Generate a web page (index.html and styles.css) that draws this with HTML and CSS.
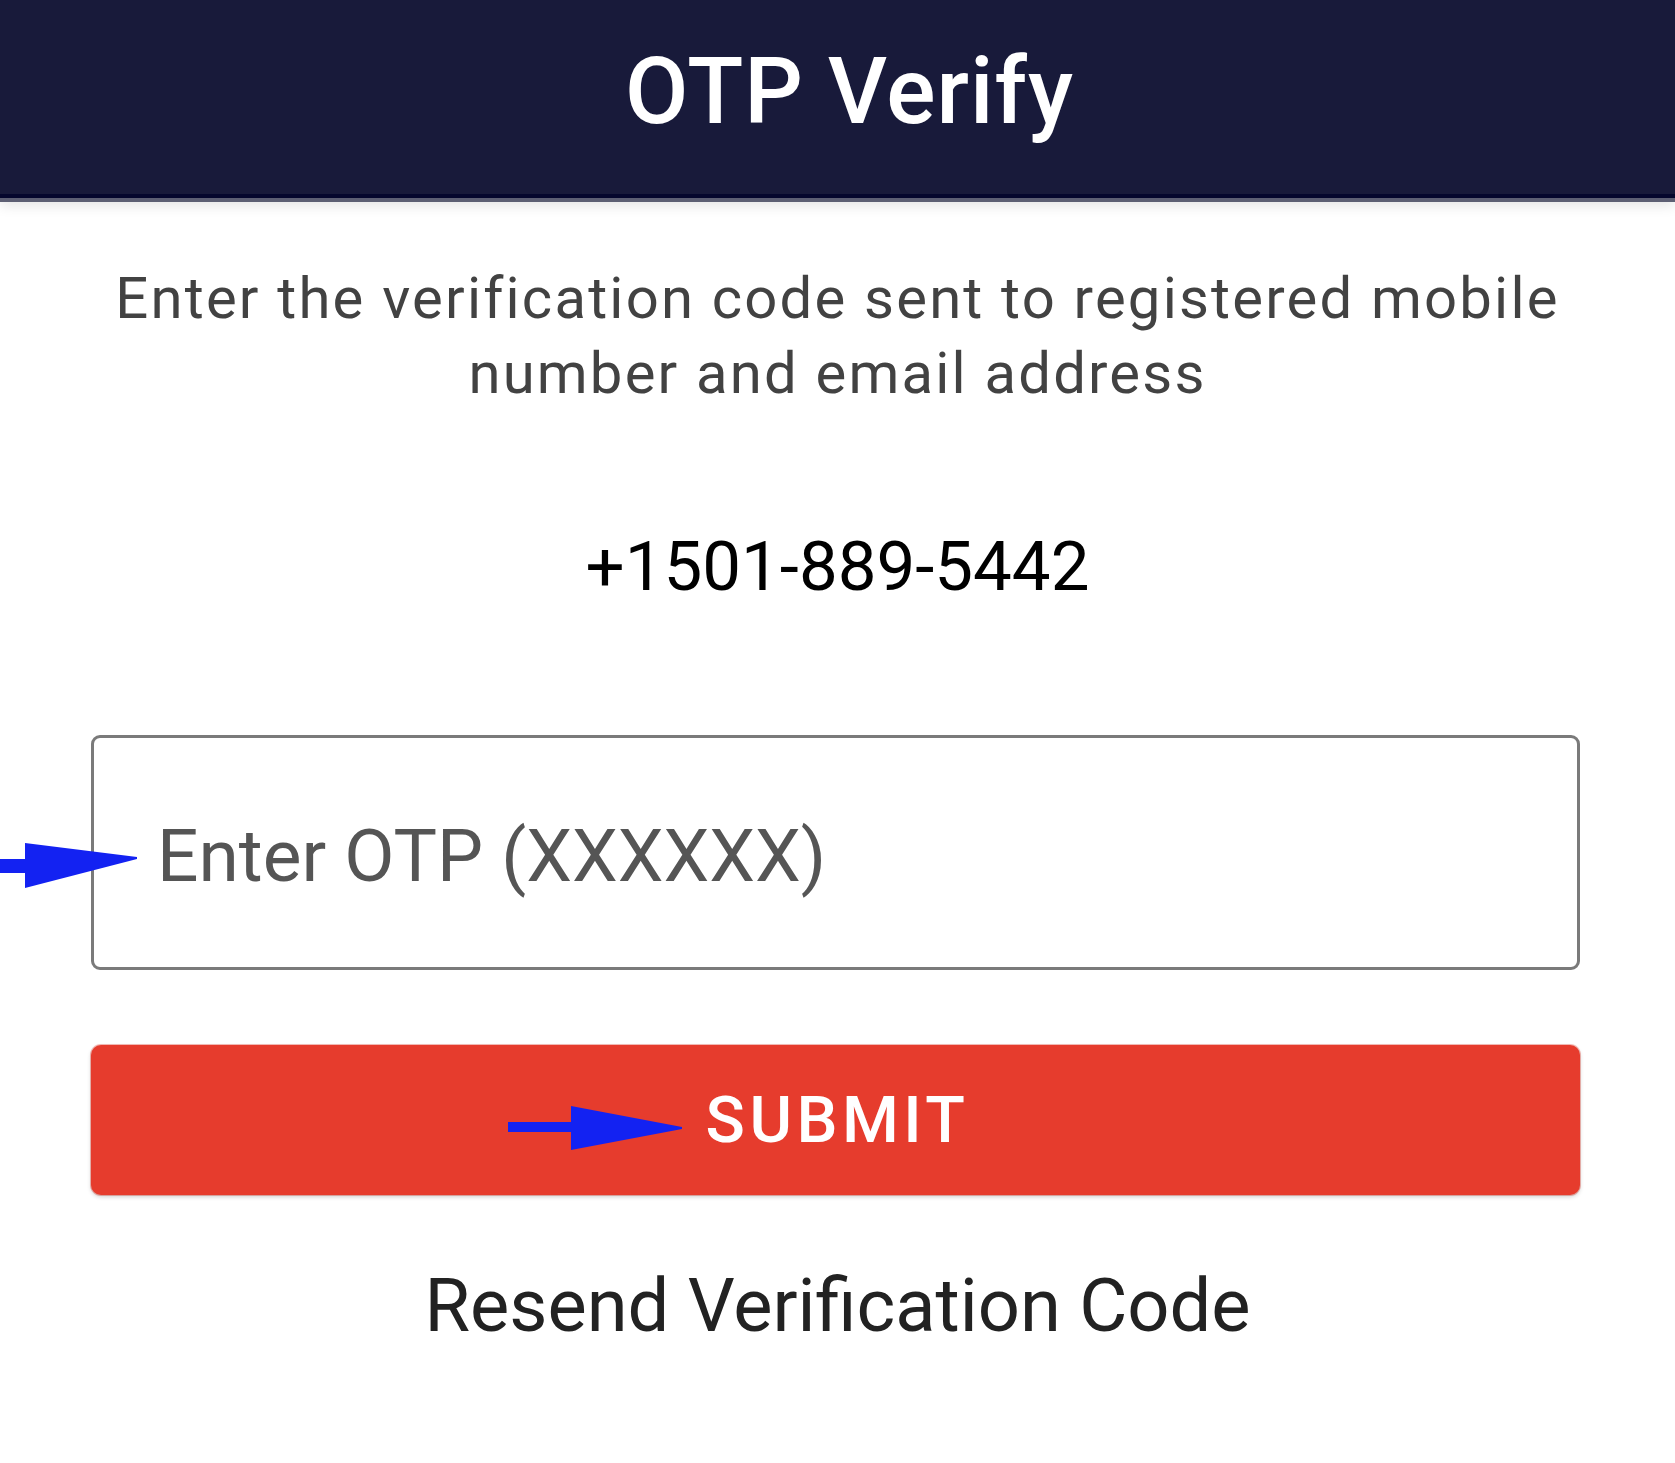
FILE: index.html
```html
<!DOCTYPE html>
<html lang="en">
<head>
<meta charset="utf-8">
<title>OTP Verify</title>
<link rel="stylesheet" href="styles.css">
</head>
<body>
<header class="appbar">
  <h1 class="appbar-title">OTP Verify</h1>
</header>
<main class="content">
  <p class="desc">Enter the verification code sent to registered mobile<br>number and email address</p>
  <p class="phone">+1501-889-5442</p>
  <form class="otp-form">
    <div class="field">
      <svg class="pointer pointer-field" width="140" height="52" viewBox="0 0 140 52" aria-hidden="true">
        <rect x="0" y="19" width="32" height="14" fill="#1322f2"/>
        <polygon points="25,3 137,17 137,19 25,48" fill="#1322f2"/>
      </svg>
      <input class="otp-input" type="text" placeholder="Enter OTP (XXXXXX)">
    </div>
    <button class="submit" type="button">
      <svg class="pointer pointer-btn" width="180" height="48" viewBox="0 0 180 48" aria-hidden="true">
        <rect x="3" y="18" width="70" height="10" fill="#1322f2"/>
        <polygon points="66,2 177,23 177,25 66,46" fill="#1322f2"/>
      </svg>
      <span class="submit-label">SUBMIT</span>
    </button>
  </form>
  <p class="resend">Resend Verification Code</p>
</main>
</body>
</html>
```

FILE: styles.css
```css
* {
  box-sizing: border-box;
}

html, body {
  margin: 0;
  padding: 0;
  background: #ffffff;
}

body {
  font-family: Roboto, "Liberation Sans", Arial, sans-serif;
  color: #222222;
}

.appbar {
  height: 198px;
  background: #181a3a;
  border-bottom: 4px solid #05072d;
  box-shadow: 0 4px 0 #5d5f73, 0 8px 12px rgba(0, 0, 0, 0.10);
  padding: 46px 0 0 24px;
  text-align: center;
}

.appbar-title {
  margin: 0;
  font-size: 92px;
  line-height: 92px;
  font-weight: 500;
  letter-spacing: 1px;
  color: #ffffff;
}

.content {
  display: flex;
  flex-direction: column;
  align-items: stretch;
}

.desc {
  margin: 63px 0 0;
  text-align: center;
  font-size: 58px;
  line-height: 75px;
  letter-spacing: 2.2px;
  color: #424242;
}

.phone {
  margin: 116px 0 0;
  text-align: center;
  font-size: 69px;
  line-height: 80px;
  color: #000000;
}

.otp-form {
  display: flex;
  flex-direction: column;
  gap: 75px;
  margin-top: 128px;
  padding: 0 95px 0 91px;
}

.field {
  position: relative;
}

.otp-input {
  display: block;
  width: 100%;
  height: 235px;
  padding: 6px 0 0 63px;
  border: 3px solid #7a7a7a;
  border-radius: 9px;
  background: #ffffff;
  font-family: Roboto, "Liberation Sans", Arial, sans-serif;
  font-size: 73px;
  color: #222222;
  outline: none;
}

.otp-input::placeholder {
  color: #555555;
  opacity: 1;
}

.pointer {
  position: absolute;
  display: block;
}

.pointer-field {
  left: -91px;
  top: 105px;
}

.pointer-btn {
  left: 414px;
  top: 59px;
}

.submit {
  position: relative;
  display: flex;
  align-items: center;
  justify-content: center;
  height: 150px;
  border: none;
  border-radius: 10px;
  background: #e63c2d;
  box-shadow: 0 2px 4px rgba(0, 0, 0, 0.18), 0 0 0 1px rgba(230, 60, 45, 0.35);
  cursor: pointer;
  padding: 0;
}

.submit-label {
  font-family: Roboto, "Liberation Sans", Arial, sans-serif;
  font-size: 65px;
  font-weight: 500;
  letter-spacing: 4.5px;
  color: #ffffff;
  margin-left: 4px;
}

.resend {
  margin: 66px 0 0;
  text-align: center;
  font-size: 74px;
  line-height: 90px;
  color: #222222;
}
```
